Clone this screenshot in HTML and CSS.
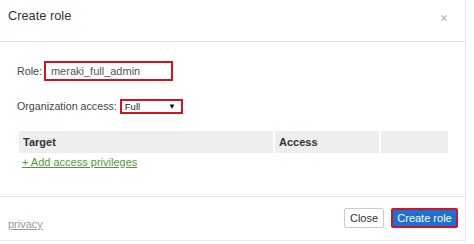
FILE: index.html
```html
<!DOCTYPE html>
<html>
<head>
<meta charset="utf-8">
<link rel="stylesheet" href="styles.css">
</head>
<body>
<div class="modal">
  <div class="modal-header">
    <span class="title">Create role</span>
    <svg class="close-x" width="6" height="6" viewBox="0 0 6 6"><path d="M0.5 0.5L5.5 5.5M5.5 0.5L0.5 5.5" stroke="#b8b8b8" stroke-width="1.4"/></svg>
  </div>
  <div class="modal-body">
    <div class="row">
      <span class="label">Role:</span>
      <div class="input">meraki_full_admin</div>
    </div>
    <div class="row row2">
      <span class="label">Organization access:</span>
      <div class="select"><span>Full</span><span class="arrow">&#9660;</span></div>
    </div>
    <div class="table-head">
      <div class="cell c1">Target</div>
      <div class="cell c2">Access</div>
      <div class="cell c3"></div>
    </div>
    <a class="add-link">+ Add access privileges</a>
  </div>
  <div class="modal-footer">
    <a class="privacy">privacy</a>
    <div class="buttons">
      <button class="btn btn-close">Close</button>
      <button class="btn btn-primary">Create role</button>
    </div>
  </div>
</div>
</body>
</html>
```
FILE: styles.css
```css
html, body {
  margin: 0;
  padding: 0;
  background: #ffffff;
}
body {
  font-family: "Liberation Sans", Arial, sans-serif;
  color: #333;
}
.modal {
  width: 466px;
  height: 241px;
  box-sizing: border-box;
  border-right: 1px solid #e6e6e6;
  border-bottom: 1px solid #ececec;
  display: flex;
  flex-direction: column;
}
.modal-header {
  height: 42px;
  box-sizing: border-box;
  padding: 9px 18px 0 8px;
  border-bottom: 1px solid #e3e3e3;
  display: flex;
  justify-content: space-between;
  align-items: flex-start;
  flex: none;
}
.title {
  font-size: 12.8px;
  line-height: 14px;
  color: #333;
}
.close-x {
  margin-top: 6px;
}
.modal-body {
  height: 155px;
  box-sizing: border-box;
  padding: 19px 17px 0 17px;
  border-bottom: 1px solid #e6e6e6;
  flex: none;
}
.row {
  display: flex;
  align-items: center;
  height: 20px;
}
.label {
  font-size: 10.7px;
  color: #444;
}
.input {
  margin-left: 2px;
  width: 129px;
  height: 20px;
  box-sizing: border-box;
  border: 2px solid #d01424;
  padding-left: 5px;
  font-size: 11px;
  line-height: 16px;
  color: #555;
}
.row2 {
  margin-top: 17px;
  height: 16px;
}
.select {
  margin-left: 3px;
  width: 63px;
  height: 15px;
  box-sizing: border-box;
  border: 2px solid #d01424;
  padding: 0 5px 0 3px;
  display: flex;
  justify-content: space-between;
  align-items: center;
  font-size: 9.5px;
  color: #222;
}
.arrow {
  font-size: 8px;
  color: #111;
}
.table-head {
  margin: 17px 0 0 2px;
  width: 429px;
  height: 22px;
  display: grid;
  grid-template-columns: 254px 104px 67px;
  column-gap: 2px;
}
.cell {
  background: #eeeeee;
  font-size: 11px;
  font-weight: bold;
  line-height: 22px;
  color: #333;
  padding-left: 4px;
}
.add-link {
  display: block;
  margin: 1px 0 0 5px;
  font-size: 11px;
  line-height: 16px;
  color: #4f9a34;
  text-decoration: underline;
}
.modal-footer {
  flex: 1;
  display: flex;
  justify-content: space-between;
  align-items: flex-start;
  padding: 11px 7px 0 8px;
}
.privacy {
  margin-top: 10px;
  font-size: 11px;
  color: #999;
  text-decoration: underline;
}
.buttons {
  display: flex;
  gap: 7px;
}
.btn {
  height: 20px;
  box-sizing: border-box;
  font-family: "Liberation Sans", Arial, sans-serif;
  font-size: 11px;
  padding: 0;
  margin: 0;
  border-radius: 2px;
  cursor: pointer;
}
.btn-close {
  width: 40px;
  background: #ffffff;
  border: 1px solid #cccccc;
  color: #333;
}
.btn-primary {
  width: 67px;
  background: #1d6fd4;
  border: 2px solid #d01424;
  color: #ffffff;
}
```
